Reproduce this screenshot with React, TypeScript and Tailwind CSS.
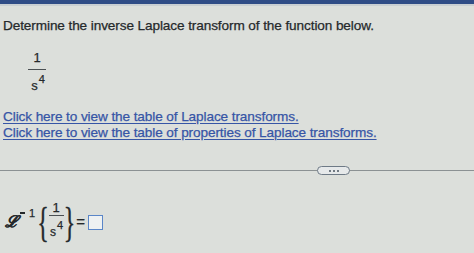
function SFour({ size = 13 }: { size?: number }) {
  return (
    <span className="inline-flex items-start" style={{ fontSize: size }}>
      <span className="leading-[14px]">s</span>
      <span className="relative -top-[7px] text-[11px] leading-[14px] ml-[1px]">4</span>
    </span>
  );
}

export default function App() {
  return (
    <div className="w-[474px] h-[253px] overflow-hidden bg-[#dcdfdb] text-[#25292b] [-webkit-text-stroke:0.25px_#25292b]" style={{ fontFamily: '"Liberation Sans", Arial, sans-serif' }}>
      <div className="h-[4px] bg-[#2f4d86]" />
      <div className="h-[2px] bg-[#c9cfd2]" />

      <p className="mt-[12px] ml-[3px] text-[13.6px] leading-[16px] tracking-[-0.1px]">
        Determine the inverse Laplace transform of the function below.
      </p>

      {/* fraction 1/s^4 */}
      <div className="ml-[28px] mt-[17px] flex flex-col items-center w-[18px]">
        <span className="text-[13px] leading-[14px]">1</span>
        <span className="block w-[18px] h-[1px] bg-[#4a4f52] mt-[4px]" />
        <span className="mt-[3px] ml-[2px]">
          <SFour />
        </span>
      </div>

      <div className="mt-[12px] ml-[3px] flex flex-col items-start text-[13.6px] leading-[16px] text-[#3655a6] [-webkit-text-stroke:0.25px_#3655a6] tracking-[-0.1px]">
        <a className="underline underline-offset-2">Click here to view the table of Laplace transforms.</a>
        <a className="underline underline-offset-2">Click here to view the table of properties of Laplace transforms.</a>
      </div>

      <div className="mt-[25px] relative h-[9px] flex items-center">
        <div className="w-full h-[1px] bg-[#8b9193]" />
        <div className="absolute left-[317px] top-0 w-[33px] h-[9px] rounded-full border border-[#6e7a86] bg-[#e6e9ea] flex items-center justify-center gap-[2px]">
          <span className="w-[2px] h-[2px] rounded-full bg-[#4a5560]" />
          <span className="w-[2px] h-[2px] rounded-full bg-[#4a5560]" />
          <span className="w-[2px] h-[2px] rounded-full bg-[#4a5560]" />
        </div>
      </div>

      {/* equation */}
      <div className="mt-[26px] ml-[5px] flex items-center h-[42px]">
        <span className="text-[16px] italic font-bold" style={{ fontFamily: '"Liberation Serif", serif' }}>
          ℒ
        </span>
        <span className="self-start mt-[6px] ml-[2px] flex items-center gap-[4px] text-[11px] leading-[12px]">
          <span className="block w-[5px] h-[1.5px] bg-[#25292b]" />
          <span>1</span>
        </span>
        <span className="text-[24px] leading-[42px] scale-y-[1.75] ml-[2px]" style={{ fontFamily: '"Liberation Serif", serif' }}>{'{'}</span>
        <div className="flex flex-col items-center w-[15px] ml-[0px]">
          <span className="text-[13px] leading-[14px]">1</span>
          <span className="block w-[15px] h-[1px] bg-[#4a4f52] mt-[0px]" />
          <span className="mt-[3px] ml-[1px]">
            <SFour size={12} />
          </span>
        </div>
        <span className="text-[24px] leading-[42px] scale-y-[1.75] ml-[0px]" style={{ fontFamily: '"Liberation Serif", serif' }}>{'}'}</span>
        <span className="text-[15px] ml-[1px]">=</span>
        <span className="ml-[3px] w-[15px] h-[15px] border-[1.5px] border-[#5a86c8] bg-[#eef1f2]" />
      </div>
    </div>
  );
}
